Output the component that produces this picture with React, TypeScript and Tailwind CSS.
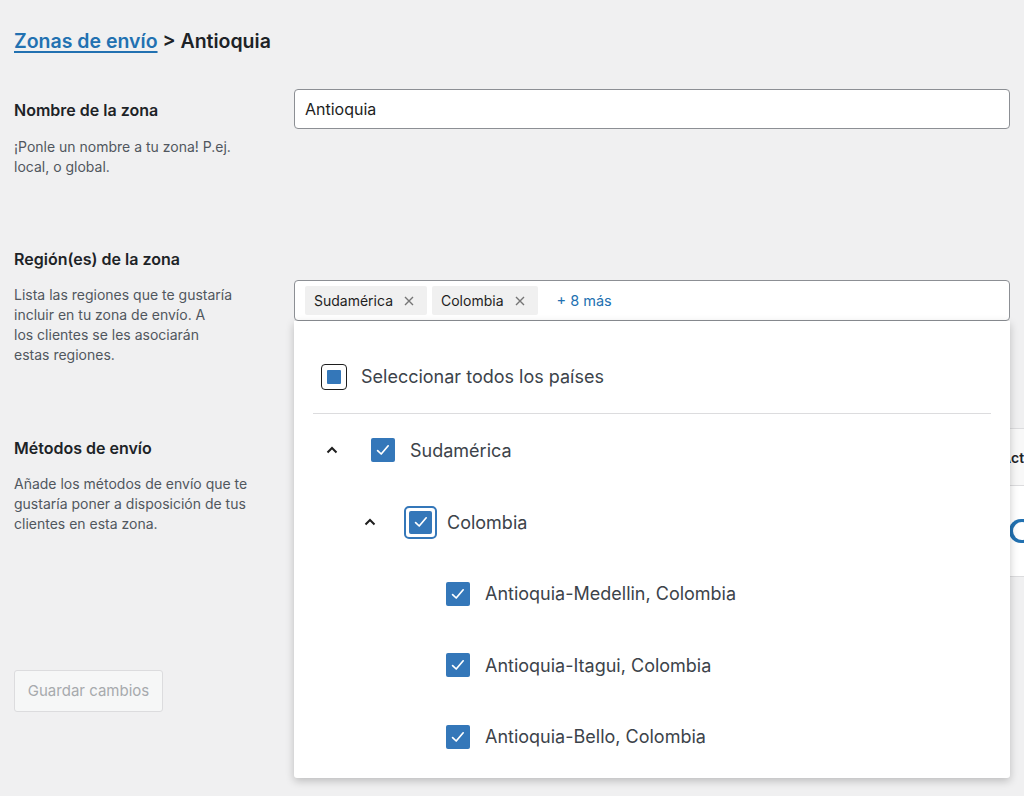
import React from "react";

const font = { fontFamily: "Inter, 'Noto Sans', 'Liberation Sans', sans-serif" };

function Check({ size = 24 }: { size?: number }) {
  return (
    <div
      className="flex items-center justify-center rounded-[2px] bg-[#3477b9]"
      style={{ width: size, height: size }}
    >
      <svg width="18" height="18" viewBox="0 0 18 18" fill="none">
        <path d="M3.6 9.6 L7.2 13 L14.2 4.8" stroke="white" strokeWidth="1.7" strokeLinecap="round" strokeLinejoin="round" />
      </svg>
    </div>
  );
}

function Chevron() {
  return (
    <svg width="12" height="8" viewBox="0 0 12 8" fill="none">
      <path d="M1.5 6.5 L6 2 L10.5 6.5" stroke="#1e1e1e" strokeWidth="2" />
    </svg>
  );
}

function XIcon() {
  return (
    <svg width="12" height="12" viewBox="0 0 12 12" fill="none">
      <path d="M2 2 L10 10 M10 2 L2 10" stroke="#757575" strokeWidth="1.4" />
    </svg>
  );
}

export default function App() {
  return (
    <div className="w-[1024px] h-[796px] overflow-hidden bg-[#f0f0f1] relative" style={font}>
      <div className="pl-[14px]">
        <h1 className="pt-[27px] text-[19.5px] leading-[28px] font-semibold text-[#1d2327]">
          <a className="text-[#2271b1] underline underline-offset-[3px] decoration-[1.5px]">Zonas de envío</a>
          <span> &gt; Antioquia</span>
        </h1>

        {/* Row 1 */}
        <div className="mt-[34px] flex h-[159px]">
          <div className="w-[280px] shrink-0 pt-[10px]">
            <div className="text-[16px] leading-[22px] font-semibold text-[#1d2327]">Nombre de la zona</div>
            <div className="mt-[16px] text-[14px] leading-[20px] text-[#50575e] whitespace-nowrap">
              ¡Ponle un nombre a tu zona! P.ej.
              <br />
              local, o global.
            </div>
          </div>
          <div className="w-[716px] shrink-0">
            <div className="h-[40px] rounded-[4px] border border-[#8c8f94] bg-white flex items-center px-[10px] text-[16px] text-[#1e1e1e]">
              Antioquia
            </div>
          </div>
        </div>

        {/* Row 2 */}
        <div className="flex h-[180px]">
          <div className="w-[280px] shrink-0">
            <div className="text-[16px] leading-[22px] font-semibold text-[#1d2327]">Región(es) de la zona</div>
            <div className="mt-[15px] text-[14px] leading-[20px] text-[#50575e] whitespace-nowrap">
              Lista las regiones que te gustaría
              <br />
              incluir en tu zona de envío. A
              <br />
              los clientes se les asociarán
              <br />
              estas regiones.
            </div>
          </div>
          <div className="w-[716px] shrink-0 pt-[32px] relative z-10">
            <div className="h-[41px] rounded-[4px] border border-[#8c8f94] bg-white flex items-center pl-[10px] gap-[5px]">
              <div className="h-[29px] rounded-[2px] bg-[#f0f0f0] flex items-center pl-[9px] pr-[12px] gap-[10px] text-[14px] text-[#1e1e1e]">
                Sudamérica <XIcon />
              </div>
              <div className="h-[29px] rounded-[2px] bg-[#f0f0f0] flex items-center pl-[9px] pr-[12px] gap-[10px] text-[14px] text-[#1e1e1e]">
                Colombia <XIcon />
              </div>
              <div className="ml-[14px] text-[14.5px] text-[#2271b1]">+ 8 más</div>
            </div>

            {/* Dropdown */}
            <div className="absolute left-0 top-[73px] w-[716px] h-[457px] bg-white rounded-b-[3px] shadow-[0_3px_8px_rgba(0,0,0,0.22)] text-[#3c434a]">
              <div className="flex items-center pt-[43px] pl-[27px] gap-[14px]">
                <div className="w-[26px] h-[26px] rounded-[4px] border-[1.5px] border-[#1e1e1e] flex items-center justify-center bg-white">
                  <div className="w-[14px] h-[14px] bg-[#3477b9] rounded-[1px]" />
                </div>
                <span className="text-[18px] leading-[26px]">Seleccionar todos los países</span>
              </div>
              <div className="mt-[23px] mx-[19px] h-px bg-[#dcdcde]" />

              <div className="flex items-center h-[72px]">
                <div className="w-[77px] flex justify-start pl-[32px]">
                  <Chevron />
                </div>
                <Check />
                <span className="ml-[15px] text-[18px]">Sudamérica</span>
              </div>

              <div className="flex items-center h-[72px]">
                <div className="w-[110px] flex justify-start pl-[70px]">
                  <Chevron />
                </div>
                <div className="w-[33px] h-[33px] rounded-[5px] border-2 border-[#3477b9] flex items-center justify-center">
                  <Check size={23} />
                </div>
                <span className="ml-[10px] text-[18px]">Colombia</span>
              </div>

              {["Antioquia-Medellin, Colombia", "Antioquia-Itagui, Colombia", "Antioquia-Bello, Colombia"].map((t) => (
                <div key={t} className="flex items-center h-[71.5px] pl-[152px]">
                  <Check />
                  <span className="ml-[15px] text-[18px]">{t}</span>
                </div>
              ))}
            </div>
          </div>
        </div>

        {/* Row 3 */}
        <div className="flex h-[200px]">
          <div className="w-[280px] shrink-0 pt-[9px]">
            <div className="text-[16px] leading-[22px] font-semibold text-[#1d2327]">Métodos de envío</div>
            <div className="mt-[15px] text-[14px] leading-[20px] text-[#50575e] whitespace-nowrap">
              Añade los métodos de envío que te
              <br />
              gustaría poner a disposición de tus
              <br />
              clientes en esta zona.
            </div>
          </div>
          <div className="w-[900px] shrink-0">
            <div className="border border-[#dcdcde] bg-white">
              <div className="h-[57px] flex items-center border-b border-[#dcdcde] bg-[#f8f8f8]">
                <div className="w-[706px] shrink-0" />
                <span className="text-[14px] font-semibold text-[#1d2327]">Activado</span>
              </div>
              <div className="h-[90px] flex items-center">
                <div className="w-[714px] shrink-0" />
                <div className="w-[44px] h-[24px] rounded-full bg-[#2271b1] flex items-center pl-[4px]">
                  <div className="w-[18px] h-[18px] rounded-full bg-white" />
                </div>
              </div>
            </div>
          </div>
        </div>

        <button className="mt-[42px] h-[42px] w-[149px] rounded-[3px] border border-[#dcdcde] bg-[#f6f7f7] text-[15px] text-[#a7aaad]">
          Guardar cambios
        </button>
      </div>
    </div>
  );
}
